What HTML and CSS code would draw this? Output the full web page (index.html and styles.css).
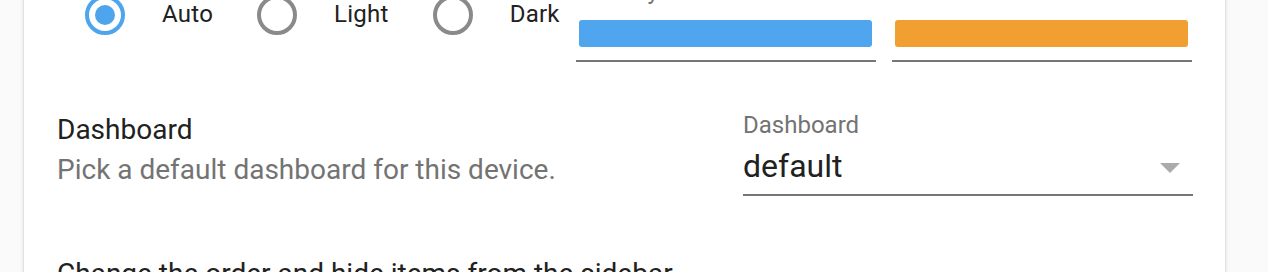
FILE: index.html
```html
<!DOCTYPE html>
<html>
<head>
<meta charset="utf-8">
<link rel="stylesheet" href="styles.css">
</head>
<body>
<div class="card">
  <div class="theme-row">
    <div class="radios">
      <div class="radio-item">
        <span class="radio checked"><span class="dot"></span></span>
        <span class="radio-label">Auto</span>
      </div>
      <div class="radio-item">
        <span class="radio"></span>
        <span class="radio-label">Light</span>
      </div>
      <div class="radio-item">
        <span class="radio"></span>
        <span class="radio-label">Dark</span>
      </div>
    </div>
    <div class="colors">
      <div class="color-field">
        <div class="field-label">Primary color</div>
        <div class="swatch swatch-primary"></div>
        <div class="underline"></div>
      </div>
      <div class="color-field">
        <div class="field-label">Accent color</div>
        <div class="swatch swatch-accent"></div>
        <div class="underline"></div>
      </div>
    </div>
  </div>

  <div class="settings-row">
    <div class="row-info">
      <div class="row-title">Dashboard</div>
      <div class="row-desc">Pick a default dashboard for this device.</div>
    </div>
    <div class="select">
      <div class="select-label">Dashboard</div>
      <div class="select-value">
        <span>default</span>
        <span class="arrow"></span>
      </div>
      <div class="underline"></div>
    </div>
  </div>

  <div class="row-title bottom-text">Change the order and hide items from the sidebar.</div>
</div>
</body>
</html>
```

FILE: styles.css
```css
html, body {
  margin: 0;
  padding: 0;
  background: #fafafa;
  font-family: Roboto, "Liberation Sans", sans-serif;
  overflow: hidden;
}

.card {
  margin: -40px 0 0 24px;
  width: 1201px;
  box-sizing: border-box;
  padding: 19px 32px 40px 33px;
  background: #ffffff;
  box-shadow: 0 2px 2px rgba(0,0,0,0.14), 0 1px 5px rgba(0,0,0,0.12), 0 3px 1px -2px rgba(0,0,0,0.2);
  min-height: 400px;
}

.theme-row {
  display: flex;
  align-items: flex-start;
}

.radios {
  display: flex;
  padding-left: 28px;
  margin-top: 16px;
}

.radio-item {
  display: flex;
  align-items: center;
  height: 40px;
}

.radio {
  width: 40px;
  height: 40px;
  box-sizing: border-box;
  border: 4px solid #8a8a8a;
  border-radius: 50%;
  display: flex;
  align-items: center;
  justify-content: center;
}

.radio.checked {
  border-color: #4fa4ee;
}

.dot {
  width: 20px;
  height: 20px;
  border-radius: 50%;
  background: #4fa4ee;
}

.radio-label {
  font-size: 24px;
  line-height: 24px;
  letter-spacing: 0.25px;
  color: #212121;
  margin-left: 37px;
  margin-right: 44px;
  margin-top: -2px;
}

.radio-item:last-child .radio-label {
  margin-right: 0;
}

.colors {
  display: flex;
  gap: 16px;
  margin-left: auto;
  margin-right: 1px;
}

.color-field {
  width: 300px;
  display: flex;
  flex-direction: column;
}

.field-label {
  font-size: 24px;
  line-height: 24px;
  color: #737373;
  white-space: nowrap;
}

.swatch {
  height: 27px;
  margin: 17px 4px 0 3px;
  border-radius: 3px;
}

.swatch-primary { background: #50a5ef; }
.swatch-accent { background: #f09f30; }

.underline {
  height: 2px;
  background: #767676;
  margin-top: 13px;
}

.settings-row {
  display: flex;
  justify-content: space-between;
  align-items: flex-start;
  margin-top: 48px;
}

.row-title {
  font-size: 28px;
  line-height: 40px;
  color: #212121;
}

.row-desc {
  font-size: 28px;
  line-height: 40px;
  color: #737373;
}

.select {
  width: 450px;
  padding-top: 3px;
}

.select-label {
  font-size: 24px;
  line-height: 24px;
  color: #737373;
}

.select-value {
  display: flex;
  align-items: center;
  justify-content: space-between;
  font-size: 32px;
  line-height: 40px;
  color: #212121;
  margin-top: 9px;
}

.arrow {
  width: 0;
  height: 0;
  border-left: 10px solid transparent;
  border-right: 10px solid transparent;
  border-top: 10px solid #ababab;
  margin-right: 13px;
  margin-top: 4px;
}

.select .underline {
  margin-top: 8px;
}

.bottom-text {
  margin-top: 58px;
}
```
